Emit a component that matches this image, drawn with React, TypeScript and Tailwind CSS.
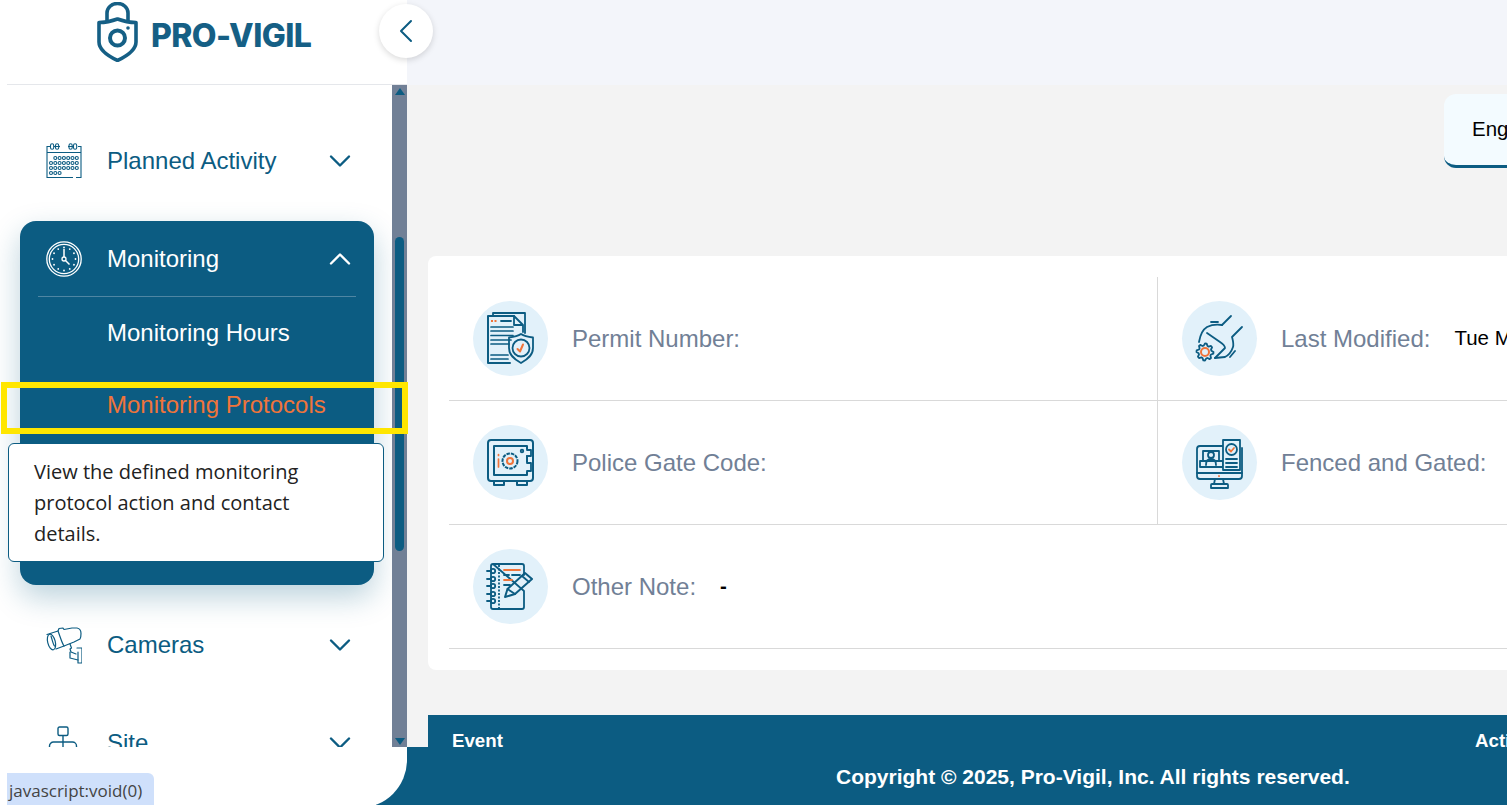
import React from "react";
import { ChevronDown, ChevronUp, ChevronLeft } from "lucide-react";

const P = "#0c5c82";
const O = "#f0743a";

function Logo() {
  return (
    <div className="flex items-center gap-[13px] text-[#155f85]">
      <svg width="41" height="60" viewBox="0 0 41 60" fill="none" stroke="#155f85">
        <path d="M10 19V11a10.500 9.500 0 0 1 21 0v8" strokeWidth="3.600" />
        <path d="M2 20.500c6 0 12-1 18.500-3.500C27 19.500 33 20.500 39 20.500V40c0 8-9 14-18.500 18.500C11 54 2 48 2 40Z" strokeWidth="3.600" strokeLinejoin="round" />
        <circle cx="20.500" cy="36" r="7.500" strokeWidth="4" />
        <circle cx="31" cy="26" r="1.800" fill="#155f85" stroke="none" />
      </svg>
      <span className="font-['Inter',sans-serif] text-[32px] font-extrabold tracking-[-0.6px] leading-none mt-[7px]">PRO-VIGIL</span>
    </div>
  );
}

function CalendarIcon() {
  const dots: React.ReactElement[] = [];
  for (let r = 0; r < 4; r++)
    for (let c = 0; c < 7; c++) {
      if ((r === 0 && c < 1) || (r === 3 && c > 2)) continue;
      dots.push(<circle key={r + "-" + c} cx={5 + c * 4.300} cy={15 + r * 5} r="1.500" />);
    }
  return (
    <svg width="36" height="36" viewBox="0 0 36 36" fill="none" stroke={P} strokeWidth="1.100">
      <path d="M4 3.500H1v31h26M30 34.500h5v-31h-3M14 3.500H8M27 3.500h-5" />
      <rect x="4.500" y="0.800" width="3.200" height="5.500" rx="1.600" />
      <rect x="9.500" y="0.800" width="3.200" height="5.500" rx="1.600" />
      <rect x="23" y="0.800" width="3.200" height="5.500" rx="1.600" />
      <rect x="27.500" y="0.800" width="3.200" height="5.500" rx="1.600" />
      <path d="M1 9.500h34" />
      {dots}
    </svg>
  );
}

function ClockIcon() {
  const ticks: React.ReactElement[] = [];
  for (let i = 0; i < 12; i++) {
    const a = (i * Math.PI) / 6;
    ticks.push(<circle key={i} cx={18 + 11.500 * Math.sin(a)} cy={18 - 11.500 * Math.cos(a)} r="0.900" fill="#fff" stroke="none" />);
  }
  return (
    <svg width="36" height="36" viewBox="0 0 36 36" fill="none" stroke="#fff" strokeWidth="1.300">
      <circle cx="18" cy="18" r="17.200" />
      <circle cx="18" cy="18" r="14.700" />
      {ticks}
      <path d="M18 8v8M19.500 19.500l4 4" strokeWidth="1.500" />
      <circle cx="18" cy="18" r="2" />
    </svg>
  );
}

function CameraIcon() {
  return (
    <svg width="36" height="37" viewBox="0 0 36 37" fill="none" stroke={P} strokeWidth="1.200" strokeLinejoin="round" strokeLinecap="round">
      <path d="M1 7.500 12 4l1-2.500 4-.5 1 1.500 8-1.500h5c3 .5 4 3 4 5.500s0 4-1 5.500L28 15 18 19l-8 3" />
      <ellipse cx="5.500" cy="15" rx="3.800" ry="8" transform="rotate(-14 5.500 15)" />
      <path d="M5 9c1 3 2 8 3.500 10M12 4c2 5 3.500 11 6 15" />
      <path d="M24 17l1.500 4-1.500 1 1 3 5 2" />
      <path d="M24 25v6l8 2" />
      <path d="M31 21h5v15h-4V25" />
    </svg>
  );
}

function SiteIcon() {
  return (
    <svg width="30" height="30" viewBox="0 0 30 30" fill="none" stroke={P} strokeWidth="1.400">
      <rect x="10" y="1" width="10" height="8.500" rx="1.500" />
      <path d="M15 9.500V16M1.500 28v-8a4 4 0 0 1 4-4h19a4 4 0 0 1 4 4v8M15 16v12" />
    </svg>
  );
}

function Circle({ children }: { children: React.ReactNode }) {
  return (
    <div className="w-[75px] h-[75px] rounded-full bg-[#e2f1fa] shrink-0 flex items-center justify-center">
      <svg width="75" height="75" viewBox="0 0 75 75" fill="none" stroke={P} strokeWidth="1.800" strokeLinejoin="round" strokeLinecap="round">
        {children}
      </svg>
    </div>
  );
}

function DocIcon() {
  return (
    <Circle>
      <path d="M20 14v-2h32v20" />
      <path d="M41 15H15v47h22" strokeWidth="2" />
      <path d="M41 15l9 9v7M41 15v9h9" />
      <path d="M18 20h6" stroke={O} strokeDasharray="2 1.500" strokeLinecap="butt" />
      <path d="M28 20h10" />
      <path d="M18 26h22M18 30h22M18 34.500h22M18 39h20M18 43h18M18 54h17M18 58h17" strokeWidth="1.700" />
      <path d="M48 33c3 2 8 3 12 3.500V47c0 7-5 11-12 15-7-4-12-8-12-15V36.500c4-.5 9-1.500 12-3.500Z" />
      <circle cx="48" cy="47" r="8.500" />
      <path d="M44.500 48l2.500 2.500 3-7" stroke={O} strokeWidth="2" />
    </Circle>
  );
}

function SafeIcon() {
  return (
    <Circle>
      <rect x="15" y="15" width="45" height="41" rx="3" strokeWidth="2" />
      <path d="M54 24v-3H21v29h33v-3M54 31v6" strokeWidth="2" />
      <path d="M54 25h4v6h-4M54 38h4v8h-4" />
      <circle cx="37" cy="36" r="7.500" strokeWidth="2" strokeDasharray="3.500 1" strokeLinecap="butt" />
      <circle cx="37" cy="36" r="3" stroke={O} strokeWidth="2" />
      <path d="M25.500 34v8M25.500 29.500v1" stroke={O} strokeWidth="1.700" />
      <circle cx="49" cy="26" r="1.300" />
      <path d="M21 56v4h10v-4M44 56v4h10v-4" strokeWidth="2" />
    </Circle>
  );
}

function NoteIcon() {
  return (
    <Circle>
      <path d="M20 15h29a2 2 0 0 1 2 2v9M51 42v16a2 2 0 0 1-2 2H20a2 2 0 0 1-2-2V17a2 2 0 0 1 2-2Z" />
      <path d="M26 16v44" strokeDasharray="2 1.500" strokeLinecap="butt" />
      {[22, 30, 37, 45, 52].map((y) => (
        <g key={y}>
          <circle cx="20" cy={y} r="2.200" />
          <path d={`M14 ${y}h4`} />
        </g>
      ))}
      <path d="M31 21h16M31 31h8" stroke={O} />
      <path d="M31 26h5M39 26h8M31 36h6" />
      <path d="M32 48l2.500-8L52 24l7 6-17 15Z" strokeWidth="2" />
      <path d="M34.500 40l7.500 5M49 27l7 6" />
    </Circle>
  );
}

function Gear({ cx, cy }: { cx: number; cy: number }) {
  const pts: string[] = [];
  const n = 8;
  for (let i = 0; i < n * 4; i++) {
    const a = (i * Math.PI * 2) / (n * 4);
    const r = i % 4 < 2 ? 8.500 : 6.500;
    pts.push(`${(cx + r * Math.cos(a)).toFixed(2)},${(cy + r * Math.sin(a)).toFixed(2)}`);
  }
  return <polygon points={pts.join(" ")} />;
}

function HandIcon() {
  return (
    <Circle>
      <path d="M49 15l-9 9M29 21h7" />
      <path d="M40 24c-6-1-11 0-15 2-5 3-7 9-8 15" />
      <path d="M25 32l13 9c3 2 5 4 5 6l-10 10" />
      <path d="M60 26l-10 10c1 4 2 7 1 10-1 3-4 8-8 10l-10 1" />
      <path d="M53 50l-5 6" />
      <Gear cx={23} cy={51} />
      <circle cx="23" cy="51" r="4" stroke={O} strokeWidth="2" fill="#e2f1fa" />
    </Circle>
  );
}

function MonitorIcon() {
  return (
    <Circle>
      <path d="M41 21H18a3 3 0 0 0-3 3v27a3 3 0 0 0 3 3h39a3 3 0 0 0 3-3V23" />
      <path d="M15 48h45" />
      <path d="M21 36V26h16v10M18 36h23v6H18Z" />
      <circle cx="29" cy="30" r="3" />
      <path d="M24 40c0-4 2-6 5-6s5 2 5 6" />
      <rect x="41" y="15" width="17" height="30" fill="#e2f1fa" />
      <circle cx="49.500" cy="24.500" r="5.500" />
      <path d="M47 24.500l2 2 3-3.500" stroke={O} />
      <path d="M44 34h11M44 38h11M44 42h11" />
      <path d="M33 54l-1 5h10l-1-5M29 60a1 1 0 0 1 1-1h15a1 1 0 0 1 1 1v3H29Z" />
      <path d="M37 51v.2" stroke={O} />
    </Circle>
  );
}

function NavRow({ icon, label }: { icon: React.ReactNode; label: string }) {
  return (
    <div className="h-[98px] shrink-0 flex items-center pl-[46px] pr-[34px] text-[#0c5c82]">
      <div className="w-[36px] flex justify-center shrink-0">{icon}</div>
      <span className="ml-[25px] text-[24px] flex-1">{label}</span>
      <ChevronDown size={36} strokeWidth={1.600} />
    </div>
  );
}

function Cell({ icon, label, value, strong }: { icon: React.ReactNode; label: string; value?: string; strong?: boolean }) {
  return (
    <div className="h-[124px] flex items-center pl-[24px] border-b border-[#d9d9d9]">
      {icon}
      <span className="ml-[24px] text-[24px] text-[#718096] whitespace-nowrap">{label}</span>
      {value && <span className={`ml-[24px] text-[20.500px] text-black whitespace-nowrap ${strong ? "font-bold" : ""}`}>{value}</span>}
    </div>
  );
}

export default function App() {
  return (
    <div className="relative w-[1507px] h-[805px] overflow-hidden flex items-start bg-[#f3f3f3] font-['Liberation_Sans',Arial,sans-serif]">
      <aside className="relative z-10 w-[407px] h-[808px] shrink-0 bg-white rounded-br-[48px] flex flex-col">
        <header className="h-[85px] shrink-0 ml-[7px] border-b border-[#e5e7eb] flex items-start pl-[90px] pt-[2px]">
          <Logo />
        </header>
        <div className="h-[662px] shrink-0 flex overflow-hidden">
          <nav className="w-[392px] shrink-0 overflow-hidden pt-[27px]">
            <NavRow icon={<CalendarIcon />} label="Planned Activity" />
            <section className="mt-[11px] ml-[20px] w-[354px] h-[364px] rounded-[16px] bg-[#0c5c82] text-white shadow-[0_12px_30px_rgba(12,92,130,0.28)]">
              <div className="h-[76px] mx-[18px] border-b border-[#4f86a3] flex items-center pl-[8px]">
                <div className="w-[36px] shrink-0"><ClockIcon /></div>
                <span className="ml-[25px] text-[24px] flex-1">Monitoring</span>
                <ChevronUp size={36} strokeWidth={1.600} className="-mr-[2px]" />
              </div>
              <div className="h-[72px] flex items-center pl-[87px] text-[24px]">Monitoring Hours</div>
              <div className="h-[72px] flex items-center pl-[87px] text-[24px] text-[#f0743a]">Monitoring Protocols</div>
            </section>
            <div className="mt-[11px]">
              <NavRow icon={<CameraIcon />} label="Cameras" />
              <NavRow icon={<div className="-ml-[3px] -mt-[4px]"><SiteIcon /></div>} label="Site" />
            </div>
          </nav>
          <div className="w-[15px] shrink-0 bg-[#718096] flex flex-col items-center pt-[3px] pb-[2px]">
            <div className="w-0 h-0 border-x-[5px] border-x-transparent border-b-[7px] border-b-[#0c5c82]" />
            <div className="mt-[142px] w-[9px] h-[314px] rounded-full bg-[#0c5c82]" />
            <div className="mt-auto w-0 h-0 border-x-[5px] border-x-transparent border-t-[7px] border-t-[#0c5c82]" />
          </div>
        </div>
      </aside>

      <main className="flex-1 min-w-0 flex flex-col">
        <div className="h-[85px] shrink-0 bg-[#f3f5fa]" />
        <div className="h-[662px] shrink-0 overflow-hidden pl-[21px]">
          <div className="pt-[9px] pl-[1016px]">
            <div className="w-[160px] h-[74px] rounded-[12px] bg-[#f3fbff] border-b-[3px] border-[#0c5c82] flex items-center pl-[28px] text-[20.500px] text-black">English</div>
          </div>
          <div className="mt-[88px] w-[1200px] h-[414px] rounded-[8px] bg-white p-[21px]">
            <div className="grid grid-cols-[709px_1fr]">
              <div className="border-r border-[#d9d9d9]"><Cell icon={<DocIcon />} label="Permit Number:" /></div>
              <Cell icon={<HandIcon />} label="Last Modified:" value="Tue Mar 11 2025" />
              <div className="border-r border-[#d9d9d9]"><Cell icon={<SafeIcon />} label="Police Gate Code:" /></div>
              <Cell icon={<MonitorIcon />} label="Fenced and Gated:" />
              <div className="col-span-2"><Cell icon={<NoteIcon />} label="Other Note:" value="-" strong /></div>
            </div>
          </div>
          <div className="mt-[45px] w-[1200px] h-[52px] bg-[#0c5c82] text-white font-bold text-[18.700px] flex items-center pl-[24px]">
            <span className="w-[1023px]">Event</span>
            <span>Action</span>
          </div>
        </div>
        <footer className="h-[58px] shrink-0 -ml-[50px] bg-[#0c5c82] text-white font-bold text-[21px] flex items-center pl-[479px] pt-[2px] whitespace-nowrap">
          Copyright © 2025, Pro-Vigil, Inc. All rights reserved.
        </footer>
      </main>

      <button className="absolute z-20 left-[379px] top-[4px] w-[54px] h-[54px] rounded-full bg-white shadow-[0_2px_6px_rgba(0,0,0,0.15)] flex items-center justify-center text-[#0c5c82]">
        <ChevronLeft size={40} strokeWidth={1.200} />
      </button>

      <div className="absolute z-20 left-[1px] top-[382px] w-[407px] h-[52px] border-[6px] border-[#ffe600]" />

      <div className="absolute z-20 left-[8px] top-[443px] w-[376px] h-[119px] rounded-[6px] bg-white border border-[#0c5c82] pl-[25px] pr-[30px] pt-[12px] text-[20px] leading-[31px] text-[#222] font-['Open_Sans',sans-serif]">
        View the defined monitoring protocol action and contact details.
      </div>

      <div className="absolute z-20 left-[7px] top-[773px] w-[147px] h-[32px] rounded-tr-[6px] bg-[#cfe0fb] pl-[2px] pt-[4px] flex items-center text-[17px] text-[#444] font-['Open_Sans',sans-serif]">
        javascript:void(0)
      </div>
    </div>
  );
}
